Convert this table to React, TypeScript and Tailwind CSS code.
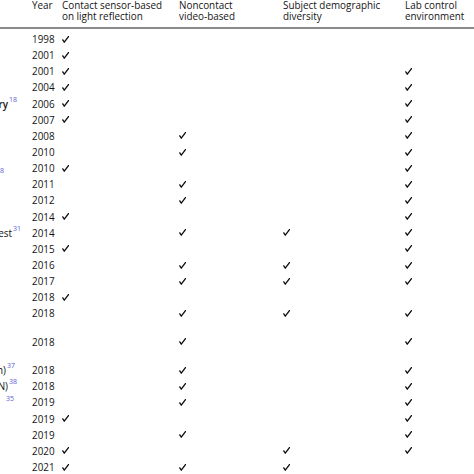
import React from "react";

const cols = "grid grid-cols-[32px_30px_117px_104px_122px_69px]";

type Row = {
  year: string;
  c?: boolean;
  n?: boolean;
  s?: boolean;
  l?: boolean;
  tall?: boolean;
  left?: React.ReactNode;
};

const Sup = ({ children, low }: { children: React.ReactNode; low?: boolean }) => (
  <span
    className={`text-[7px] leading-[8px] text-[#5c5cd4] relative ml-[1px] ${low ? "top-[3px]" : "-top-[4px]"}`}
  >
    {children}
  </span>
);

const Left = ({ pr, children }: { pr: string; children: React.ReactNode }) => (
  <div className={`h-[16.15px] flex items-center justify-end overflow-hidden whitespace-nowrap ${pr}`}>
    {children}
  </div>
);

const rows: Row[] = [
  { year: "1998", c: true },
  { year: "2001", c: true },
  { year: "2001", c: true, l: true },
  { year: "2004", c: true, l: true },
  {
    year: "2006",
    c: true,
    l: true,
    left: (
      <Left pr="pr-[15px]">
        <span className="font-semibold">Pulse oximetry</span>
        <Sup>18</Sup>
      </Left>
    ),
  },
  { year: "2007", c: true, l: true },
  { year: "2008", n: true, l: true },
  { year: "2010", n: true, l: true },
  {
    year: "2010",
    c: true,
    l: true,
    left: (
      <Left pr="pr-[28px]">
        <Sup low>28</Sup>
      </Left>
    ),
  },
  { year: "2011", n: true, l: true },
  { year: "2012", n: true, l: true },
  { year: "2014", c: true, l: true },
  {
    year: "2014",
    n: true,
    s: true,
    l: true,
    left: (
      <Left pr="pr-[11px]">
        <span>Stress test</span>
        <Sup>31</Sup>
      </Left>
    ),
  },
  { year: "2015", c: true, l: true },
  { year: "2016", n: true, s: true, l: true },
  { year: "2017", n: true, s: true, l: true },
  { year: "2018", c: true },
  { year: "2018", n: true, s: true, l: true, tall: true },
  { year: "2018", n: true, l: true, tall: true },
  {
    year: "2018",
    n: true,
    l: true,
    left: (
      <Left pr="pr-[17px]">
        <span>(DeepPhys h)</span>
        <Sup>37</Sup>
      </Left>
    ),
  },
  {
    year: "2018",
    n: true,
    l: true,
    left: (
      <Left pr="pr-[15px]">
        <span>(HR-CNN)</span>
        <Sup>38</Sup>
      </Left>
    ),
  },
  {
    year: "2019",
    n: true,
    l: true,
    left: (
      <Left pr="pr-[18px]">
        <Sup>35</Sup>
      </Left>
    ),
  },
  { year: "2019", c: true, l: true },
  { year: "2019", n: true, l: true },
  { year: "2020", c: true, s: true, l: true },
  { year: "2021", c: true, n: true, s: true },
];

const Check = () => (
  <svg width="7" height="7" viewBox="0 0 8 8" className="text-[#0d0d0d]">
    <path
      d="M0.9 4.4 L2.6 7.1 L7.4 0.6"
      fill="none"
      stroke="currentColor"
      strokeWidth="1.5"
      strokeLinecap="round"
      strokeLinejoin="round"
    />
  </svg>
);

const Cell = ({ on }: { on?: boolean }) => (
  <div className="h-[16.15px] flex items-center">{on ? <Check /> : null}</div>
);

export default function App() {
  return (
    <div
      className="w-[474px] h-[474px] bg-white overflow-hidden text-[9.9px] text-[#141414]"
      style={{ fontFamily: '"Open Sans", "Noto Sans", sans-serif' }}
    >
      <div className={`${cols} leading-[10.9px] h-[27px]`}>
        <div />
        <div>Year</div>
        <div>
          Contact sensor-based
          <br />
          on light reflection
        </div>
        <div>
          Noncontact
          <br />
          video-based
        </div>
        <div>
          Subject demographic
          <br />
          diversity
        </div>
        <div>
          Lab control
          <br />
          environment
        </div>
      </div>
      <div className="h-[2px] bg-[#8a8a8a]" />
      <div className="h-[2px]" />
      <div className="flex flex-col">
        {rows.map((r, i) => (
          <div
            key={i}
            className={`${cols} items-start leading-[16.15px] ${r.tall ? "h-[28.4px]" : "h-[16.15px]"}`}
          >
            <div className="h-[16.15px]">{r.left}</div>
            <div className="h-[16.15px]">{r.year}</div>
            <Cell on={r.c} />
            <Cell on={r.n} />
            <Cell on={r.s} />
            <Cell on={r.l} />
          </div>
        ))}
      </div>
    </div>
  );
}
